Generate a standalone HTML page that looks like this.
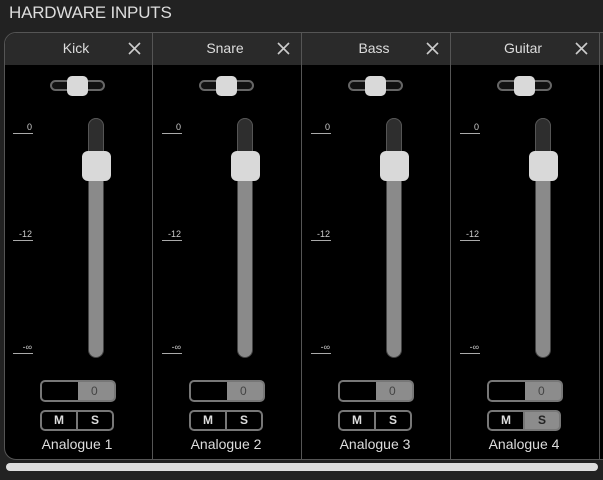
<!DOCTYPE html><html><head><style>
*{margin:0;padding:0;box-sizing:border-box}
body{width:603px;height:480px;background:#222;position:relative;overflow:hidden;font-family:"Liberation Sans",sans-serif}
.a{position:absolute}
.title{left:9px;top:3px;color:#ddd;font-size:17px;letter-spacing:-0.2px}
.panel{left:4px;top:32px;width:620px;height:428px;background:#000;border:1px solid #555;border-radius:12px 0 0 12px}
.hdr{left:5px;top:33px;width:600px;height:32px;background:#2a2a2a;border-radius:11px 0 0 0}
.div{width:1px;background:#555;top:33px;height:426px}
.name{top:40px;width:80px;text-align:center;color:#ddd;font-size:14px}
.x{top:42px}
.pan{top:80px;width:55px;height:11px;border:2px solid #666;border-radius:6px;background:#111}
.pk{top:76px;width:21px;height:20px;background:#d9d9d9;border-radius:5px}
.tr{top:118px;width:16px;height:240px;border-radius:8px;background:#8a8a8a;border:1px solid #444}
.trt{top:118px;width:16px;height:45px;border-radius:8px 8px 0 0;background:#2e2e2e;border:1px solid #555;border-bottom:none}
.fk{top:151px;width:29px;height:30px;background:#d9d9d9;border-radius:6px}
.sc{color:#ccc;font-size:9px;text-align:right;width:20px}
.ln{height:1px;width:20px;background:#aaa}
.box{top:380px;width:76px;height:22px;border:2px solid #777;border-radius:5px;background:linear-gradient(90deg,#000 50%,#8c8c8c 50%);color:#444;font-size:12px}
.ms{top:410px;width:74px;height:21px;border:2px solid #777;border-radius:5px;display:flex;color:#ddd;font-size:12px;font-weight:bold}
.ms span{flex:1;text-align:center;line-height:17px}
.ms span:first-child{border-right:2px solid #777}
.lab{top:436px;width:120px;text-align:center;color:#ddd;font-size:14px}
.sb{left:6px;top:463px;width:592px;height:8px;background:#ddd;border-radius:4px}
</style></head><body>
<div class="a title">HARDWARE INPUTS</div>
<div class="a panel"></div>
<div class="a hdr"></div>
<div class="a sb"></div>
<div id="c"></div>
<script>
var n=["Kick","Snare","Bass","Guitar"],h="";
for(var i=0;i<4;i++){var c=4+149*i;
h+='<div class="a div" style="left:'+(c+148)+'px"></div>';
h+='<div class="a name" style="left:'+(c+32)+'px">'+n[i]+'</div>';
h+='<svg class="a x" style="left:'+(c+124)+'px" width="13" height="13"><path d="M1 1L12 12M12 1L1 12" stroke="#ccc" stroke-width="1.6"/></svg>';
h+='<div class="a pan" style="left:'+(c+46)+'px"></div><div class="a pk" style="left:'+(c+63)+'px"></div>';
h+='<div class="a tr" style="left:'+(c+84)+'px"></div><div class="a trt" style="left:'+(c+84)+'px"></div><div class="a fk" style="left:'+(c+78)+'px"></div>';
[["0",122],["-12",229],["-∞",342]].forEach(function(s){h+='<div class="a sc" style="left:'+(c+8)+'px;top:'+s[1]+'px">'+s[0]+'</div><div class="a ln" style="left:'+(c+9)+'px;top:'+(s[1]+11)+'px"></div>';});
h+='<div class="a box" style="left:'+(c+36)+'px"><span class="a" style="left:49px;top:2px">0</span></div>';
h+='<div class="a ms" style="left:'+(c+36)+'px'+(i==3?';background:linear-gradient(90deg,#000 50%,#8c8c8c 50%)':'')+'"><span>M</span><span'+(i==3?' style="color:#222"':'')+'>S</span></div>';
h+='<div class="a lab" style="left:'+(c+13)+'px">Analogue '+(i+1)+'</div>';}
document.getElementById("c").innerHTML=h;
</script>
</body></html>
